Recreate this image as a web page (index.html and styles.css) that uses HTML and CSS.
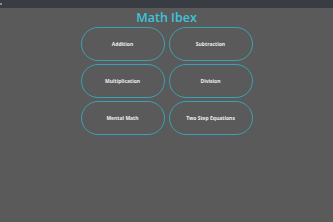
FILE: index.html
```
<!DOCTYPE html>
<html>
<head>
<meta charset="utf-8">
<link rel="stylesheet" href="styles.css">
</head>
<body>
<div class="topbar"><span class="mark"></span></div>
<h1 class="title">Math Ibex</h1>
<div class="grid">
  <div class="btn">Addition</div>
  <div class="btn">Subtraction</div>
  <div class="btn">Multiplication</div>
  <div class="btn">Division</div>
  <div class="btn">Mental Math</div>
  <div class="btn">Two Step Equations</div>
</div>
</body>
</html>
```
FILE: styles.css
```
html, body {
  margin: 0;
  padding: 0;
  background: #5a5a5a;
  height: 100%;
  font-family: "Open Sans", "Noto Sans", sans-serif;
}
.topbar {
  height: 8px;
  background: #393c42;
  position: relative;
}
.mark {
  position: absolute;
  left: 0;
  top: 3px;
  width: 2px;
  height: 2px;
  background: #8a8d92;
}
.title {
  margin: 0;
  padding-top: 1px;
  text-align: center;
  color: #3cc4dc;
  font-size: 12.5px;
  font-weight: 600;
  line-height: 17px;
}
.grid {
  margin: 1px auto 0;
  display: grid;
  grid-template-columns: 84px 84px;
  grid-auto-rows: 34px;
  column-gap: 4px;
  row-gap: 3px;
  width: 172px;
}
.btn {
  box-sizing: border-box;
  border: 1.5px solid #3aa2b2;
  border-radius: 17px;
  display: flex;
  align-items: center;
  justify-content: center;
  color: #eeeeee;
  font-size: 5px;
  font-weight: 700;
}
```
